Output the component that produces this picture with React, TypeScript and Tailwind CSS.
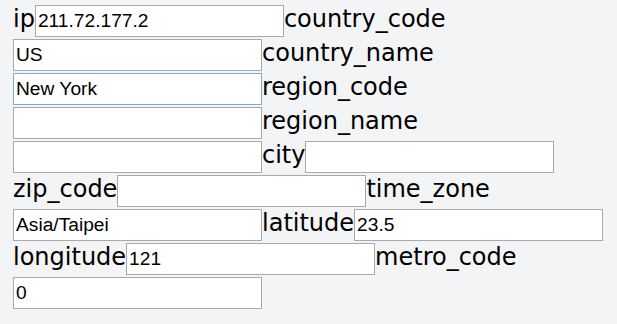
const fields: { label: string; value: string; focused?: boolean }[] = [
  { label: "ip", value: "211.72.177.2" },
  { label: "country_code", value: "US" },
  { label: "country_name", value: "New York", focused: true },
  { label: "region_code", value: "" },
  { label: "region_name", value: "" },
  { label: "city", value: "" },
  { label: "zip_code", value: "" },
  { label: "time_zone", value: "Asia/Taipei" },
  { label: "latitude", value: "23.5" },
  { label: "longitude", value: "121" },
  { label: "metro_code", value: "0" },
];

export default function App() {
  return (
    <div className="min-h-[324px] w-full bg-[#f3f4f6] pl-[13px] pr-[9px] pt-[5px]">
      <div className="flex flex-wrap items-baseline gap-y-[2px]">
        {fields.map((f) => (
          <div key={f.label} className="contents">
            <span className="font-['DejaVu_Sans',sans-serif] text-[24px] leading-[28px] text-black">
              {f.label}
            </span>
            <input
              defaultValue={f.value}
              className={`h-[32px] w-[249px] border bg-white px-[2px] font-['Liberation_Sans',Arial,sans-serif] text-[19.2px] text-black outline-none ${
                f.focused ? "border-[#7fa7e0]" : "border-[#a9a9a9]"
              }`}
            />
          </div>
        ))}
      </div>
    </div>
  );
}
